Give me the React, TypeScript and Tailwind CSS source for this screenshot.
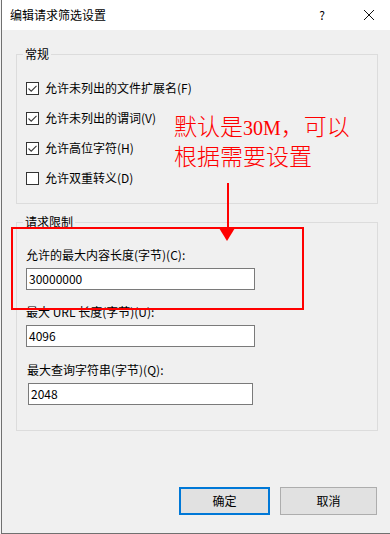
import React from "react";

const font = { fontFamily: '"Noto Sans CJK SC", "Noto Sans", sans-serif' };

function Check({ checked }: { checked: boolean }) {
  return (
    <span className="w-[13px] h-[13px] border border-[#333333] bg-white flex items-center justify-center shrink-0">
      {checked && (
        <svg width="11" height="11" viewBox="0 0 11 11">
          <path d="M1.5 5.5 L4.2 8.2 L9.5 2.8" fill="none" stroke="#3a3a3a" strokeWidth="1.1" />
        </svg>
      )}
    </span>
  );
}

function Row({ checked, label }: { checked: boolean; label: string }) {
  return (
    <div className="h-[30px] flex items-center gap-[6px]">
      <Check checked={checked} />
      <span className="text-[12px] leading-[16px] text-black">{label}</span>
    </div>
  );
}

function Field({ value, className }: { value: string; className: string }) {
  return (
    <div className={"h-[22px] border border-[#7a7a7a] bg-white flex items-center pl-[2px] text-[12px] text-black " + className}>
      {value}
    </div>
  );
}

export default function App() {
  return (
    <div className="w-[390px] h-[534px] flex bg-[#f4f4f4]" style={font}>
      <div className="relative ml-[1px] flex-1 flex flex-col border-l border-b border-[#707070] overflow-hidden">
        {/* title bar */}
        <div className="h-[30px] bg-white flex items-center shrink-0">
          <span className="ml-[8px] text-[12px] text-black">编辑请求筛选设置</span>
          <span className="ml-auto text-[12px] text-black mr-[38px]">?</span>
          <svg width="12" height="12" viewBox="0 0 12 12" className="mr-[15px]">
            <path d="M1 1 L11 11 M11 1 L1 11" stroke="#111" strokeWidth="1" />
          </svg>
        </div>
        {/* body */}
        <div className="flex-1 bg-[#f0f0f0] flex flex-col pl-[14px] pr-[12px]">
          <fieldset className="mt-[17px] border border-[#dcdcdc] pl-[9px] pt-[12px] pb-[10px]">
            <legend className="ml-[-3px] px-[2px] text-[12px] leading-[14px] text-black">常规</legend>
            <Row checked label="允许未列出的文件扩展名(F)" />
            <Row checked label="允许未列出的谓词(V)" />
            <Row checked label="允许高位字符(H)" />
            <Row checked={false} label="允许双重转义(D)" />
          </fieldset>
          <fieldset className="mt-[11px] border border-[#dcdcdc] pl-[9px] pt-[18px] pb-[25px] flex flex-col">
            <legend className="ml-[-3px] px-[2px] text-[12px] leading-[14px] text-black">请求限制</legend>
            <div className="text-[12px] leading-[16px] text-black">允许的最大内容长度(字节)(C):</div>
            <Field value="30000000" className="mt-[5px] w-[229px]" />
            <div className="mt-[14px] text-[12px] leading-[16px] text-black">最大 URL 长度(字节)(U):</div>
            <Field value="4096" className="mt-[5px] w-[229px]" />
            <div className="mt-[15px] ml-[1px] text-[12px] leading-[16px] text-black">最大查询字符串(字节)(Q):</div>
            <Field value="2048" className="mt-[5px] ml-[2px] w-[225px]" />
          </fieldset>
          <div className="mt-[56px] flex justify-end gap-[10px] pr-[1px]">
            <button className="w-[91px] h-[28px] border-2 border-[#0078d7] bg-[#e1e1e1] text-[12px] text-black">确定</button>
            <button className="w-[97px] h-[28px] border border-[#adadad] bg-[#e1e1e1] text-[12px] text-black">取消</button>
          </div>
        </div>

        {/* red annotation overlay */}
        <div className="absolute left-[172px] top-[113px] text-[#ff0000] text-[23px] leading-[30px] font-extralight whitespace-nowrap" style={{ fontFamily: '"Liberation Serif", "Noto Sans CJK SC", serif' }}>
          <div>
            默认是<span className="text-[20px]">30M</span>，可以
          </div>
          <div>根据需要设置</div>
        </div>
        <div className="absolute left-[225px] top-[183px] w-[2px] h-[47px] bg-[#ff0000]" />
        <svg className="absolute left-[217px] top-[228px]" width="16" height="14" viewBox="0 0 16 14">
          <path d="M0 0 L16 0 L8 13 Z" fill="#ff0000" />
        </svg>
        <div className="absolute left-[9px] top-[227px] w-[293px] h-[83px] border-2 border-[#ff0000]" />
      </div>
    </div>
  );
}
